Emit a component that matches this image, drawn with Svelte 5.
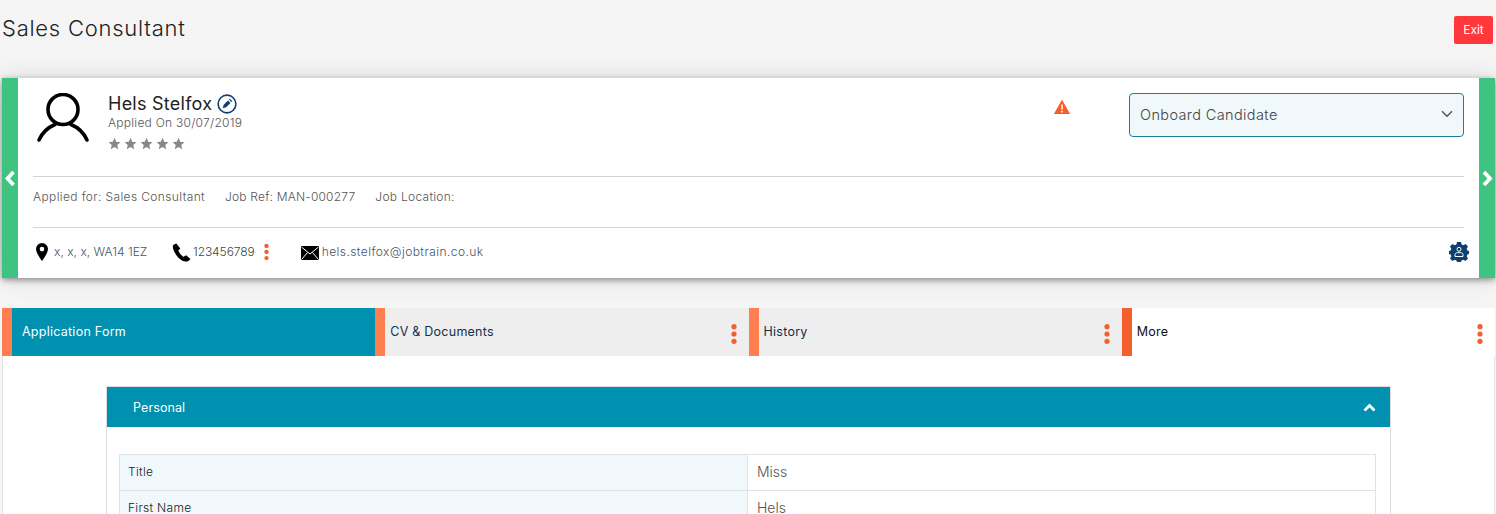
<script>
	const stars = [1, 2, 3, 4, 5];

	const tabs = [
		{ label: 'Application Form', active: true },
		{ label: 'CV & Documents' },
		{ label: 'History' },
		{ label: 'More', last: true }
	];

	const rows = [
		{ label: 'Title', value: 'Miss' },
		{ label: 'First Name', value: 'Hels' }
	];
</script>

{#snippet dots()}
	<svg class="dots" width="6" height="20" viewBox="0 0 6 20" fill="#f55f2d">
		<circle cx="3" cy="2.7" r="2.6" />
		<circle cx="3" cy="10" r="2.6" />
		<circle cx="3" cy="17.3" r="2.6" />
	</svg>
{/snippet}

<div class="page">
	<header class="top">
		<h1>Sales Consultant</h1>
		<button class="exit">Exit</button>
	</header>

	<section class="card">
		<div class="side">
			<svg width="12" height="17" viewBox="0 0 12 17" fill="none" stroke="#fff" stroke-width="3.8">
				<path d="M9.500 2l-6 6.500 6 6.500" />
			</svg>
		</div>

		<div class="card-body">
			<div class="head">
				<svg class="avatar" width="56" height="52" viewBox="0 0 56 52" fill="none" stroke="#000" stroke-width="3.6">
					<circle cx="28" cy="16.500" r="15" />
					<path d="M4 47C8 38 14 34 20 31.500M52 47C48 38 42 34 36 31.500" stroke-linecap="round" />
				</svg>
				<div class="who">
					<div class="name">
						Hels Stelfox
						<svg width="20" height="20" viewBox="0 0 21 21">
							<circle cx="10.500" cy="10.500" r="9.300" fill="none" stroke="#0f3f6e" stroke-width="1.700" />
							<path d="M6 15l1-3.600 4.600-4.600 2.600 2.600-4.600 4.600zM12.500 5.900l1-1 2.600 2.600-1 1z" fill="#0f3f6e" />
						</svg>
					</div>
					<div class="applied">Applied On 30/07/2019</div>
					<div class="stars">
						{#each stars as s (s)}
							<svg width="13" height="13" viewBox="0 0 24 24" fill="#888">
								<path d="M12 1.500l3.200 7.200 7.800.8-5.900 5.200 1.700 7.700L12 18.400l-6.800 4 1.700-7.700L1 9.500l7.800-.8z" />
							</svg>
						{/each}
					</div>
				</div>
				<svg class="warn" width="16" height="14" viewBox="0 0 16 14">
					<path d="M8 .5L15.600 14H.4z" fill="#f55f2d" stroke="#f55f2d" stroke-linejoin="round" />
					<path d="M8 4.500v5M8 10.800v1.600" stroke="#fff" stroke-width="1.500" />
				</svg>
				<div class="select">
					<span>Onboard Candidate</span>
					<svg width="12" height="8" viewBox="0 0 12 8" fill="none" stroke="#555" stroke-width="1.500">
						<path d="M1 1.200l5 5 5-5" />
					</svg>
				</div>
			</div>

			<div class="job">
				<span>Applied for: Sales Consultant</span>
				<span>Job Ref: MAN-000277</span>
				<span>Job Location:</span>
			</div>

			<div class="contact">
				<svg class="pin" width="12" height="18" viewBox="0 0 12 18">
					<path fill-rule="evenodd" d="M6 0a6 6 0 0 1 6 6c0 3.600-3.600 8.600-6 12C3.600 14.600 0 9.600 0 6a6 6 0 0 1 6-6zm0 3.800a2.300 2.300 0 1 0 0 4.600 2.300 2.300 0 0 0 0-4.600z" />
				</svg>
				<span class="addr">x, x, x, WA14 1EZ</span>
				<svg class="phone" width="19" height="19" viewBox="0 0 19 19">
					<path d="M4.300.5L1.500 1.800C.3 3 .6 6 3 10c2.500 4.200 6 8 10.500 8.500 1.500.2 3.300-.3 5-2.500l-4.400-3.700-2.500 1.500c-1.500-.6-4.600-4.300-5.300-6.400l2-2z" />
				</svg>
				<span class="tel">123456789</span>
				{@render dots()}
				<svg class="mail" width="18" height="14" viewBox="0 0 18 14">
					<rect width="18" height="14" />
					<path d="M.5 1l8.500 7 8.500-7M.5 13.500L6.500 6.500M17.500 13.500L11.500 6.500" fill="none" stroke="#fff" stroke-width="1" />
				</svg>
				<span class="email">hels.stelfox@jobtrain.co.uk</span>
				<svg class="gear" width="20" height="20" viewBox="0 0 20 20">
					<path fill="#0f3f6e" d="M8 0h4l.6 2.600 1.700.7L16.600 2 19 4.400l-1.300 2.300.7 1.700L20 9v3l-1.600.6-.7 1.700 1.300 2.300-2.400 2.400-2.300-1.300-1.700.7L12 20H8l-.6-1.600-1.700-.7L3.400 19 1 16.600l1.300-2.300-.7-1.700L0 12V9l1.600-.6.7-1.700L1 4.400 3.400 2l2.300 1.300 1.700-.7z" />
					<circle cx="10" cy="7.300" r="2" fill="none" stroke="#fff" stroke-width="1" />
					<path d="M6 14.500v-2c0-1 1-1.800 2.500-1.800h3c1.500 0 2.500.8 2.500 1.800v2z" fill="none" stroke="#fff" stroke-width="1" />
				</svg>
			</div>
		</div>

		<div class="side">
			<svg width="12" height="17" viewBox="0 0 12 17" fill="none" stroke="#fff" stroke-width="3.800">
				<path d="M3 2l6 6.500-6 6.500" />
			</svg>
		</div>
	</section>

	<nav class="tabs">
		{#each tabs as tab (tab.label)}
			<div class="tab" class:active={tab.active} class:last={tab.last}>
				<span>{tab.label}</span>
				{#if !tab.active}
					{@render dots()}
				{/if}
			</div>
		{/each}
	</nav>

	<main class="content">
		<section class="panel">
			<div class="panel-head">
				<span>Personal</span>
				<svg width="13" height="9" viewBox="0 0 13 9" fill="none" stroke="#fff" stroke-width="2.800">
					<path d="M1.500 7.500l5-5 5 5" />
				</svg>
			</div>
			<div class="panel-body">
				<div class="table">
					{#each rows as row (row.label)}
						<div class="label">{row.label}</div>
						<div class="value">{row.value}</div>
					{/each}
				</div>
			</div>
		</section>
	</main>
</div>

<style>
	:global(body) {
		background: #f5f5f5;
		overflow: hidden;
	}

	.page {
		height: 514px;
		overflow: hidden;
		font-family: Inter, "Open Sans", sans-serif;
		color: #333;
	}

	.top {
		height: 78px;
		display: flex;
		justify-content: space-between;
		align-items: flex-start;
		padding: 0 3px 0 2px;
	}

	h1 {
		margin: 14px 0 0;
		font-size: 22px;
		line-height: 29px;
		font-weight: 300;
		letter-spacing: 0.75px;
		color: #222;
	}

	.exit {
		margin-top: 16px;
		width: 39px;
		height: 28px;
		padding: 0 0 2px;
		border: none;
		border-radius: 2px;
		background: #ff383c;
		color: #fff;
		font: inherit;
		font-size: 12px;
	}

	.card {
		margin: 0 1px 0 2px;
		height: 200px;
		display: flex;
		background: #fff;
		box-shadow: 0 2px 6px rgba(0, 0, 0, 0.4), 0 0 24px rgba(0, 0, 0, 0.12);
	}

	.side {
		width: 16px;
		flex: none;
		background: #3fc380;
		display: flex;
		align-items: center;
		justify-content: center;
	}

	.card-body {
		flex: 1;
		min-width: 0;
		padding: 0 15px;
		display: flex;
		flex-direction: column;
	}

	.head {
		height: 98px;
		flex: none;
		display: flex;
		align-items: flex-start;
		border-bottom: 1px solid #cfd5dc;
	}

	.avatar {
		margin: 15px 0 0 2px;
		flex: none;
	}

	.who {
		margin: 15px 0 0 17px;
		flex: 1;
	}

	.name {
		display: flex;
		align-items: center;
		gap: 5px;
		height: 21px;
		font-size: 18px;
		line-height: 21px;
		letter-spacing: 0.25px;
		color: #222;
	}

	.applied {
		font-size: 12px;
		line-height: 17px;
		letter-spacing: 0.25px;
		font-weight: 350;
		color: #555;
	}

	.stars {
		display: flex;
		gap: 3px;
		margin-top: 6px;
	}

	.warn {
		margin: 22px 59px 0 0;
		flex: none;
	}

	.select {
		margin-top: 15px;
		width: 335px;
		height: 44px;
		box-sizing: border-box;
		flex: none;
		display: flex;
		align-items: center;
		justify-content: space-between;
		padding: 0 10px 2px 10px;
		background: #f0f8fb;
		border: 1px solid #1a7f9c;
		border-radius: 4px;
		font-size: 14.5px;
		font-weight: 300;
		letter-spacing: 0.38px;
		color: #444;
	}

	.job {
		height: 51px;
		flex: none;
		box-sizing: border-box;
		padding-top: 11px;
		display: flex;
		gap: 20px;
		font-size: 12px;
		line-height: 17px;
		letter-spacing: 0.2px;
		font-weight: 350;
		color: #555;
		border-bottom: 1px solid #cfd5dc;
	}

	.job span:first-child {
		letter-spacing: 0.37px;
	}

	.job span:last-child {
		letter-spacing: 0.28px;
	}

	.contact {
		flex: 1;
		display: flex;
		align-items: center;
		padding-bottom: 2px;
		font-size: 12px;
		font-weight: 350;
		color: #3f566e;
	}

	.contact span {
		margin-bottom: 2px;
	}

	.contact .dots {
		width: 5px;
		height: 18px;
	}

	.pin {
		margin: 0 6px 0 3px;
	}

	.addr {
		width: 118px;
		letter-spacing: 0.02px;
	}

	.phone {
		margin-right: 2px;
	}

	.tel {
		color: #444;
		margin-right: 9px;
		letter-spacing: -0.08px;
	}

	.mail {
		margin: 2px 3px 0 32px;
	}

	.email {
		flex: 1;
		letter-spacing: 0.44px;
	}

	.gear {
		margin-right: -5px;
	}

	.tabs {
		margin: 30px 1px 0 2px;
		height: 48px;
		display: grid;
		grid-template-columns: repeat(4, 1fr);
	}

	.tab {
		display: flex;
		align-items: center;
		justify-content: space-between;
		box-sizing: border-box;
		padding: 0 12px 0 5px;
		border-left: 10px solid #ff7f50;
		background: #eee;
		color: #12304d;
		font-size: 12.5px;
		font-weight: 400;
		letter-spacing: 0.25px;
	}

	.tab span {
		padding-bottom: 2px;
	}

	.tab .dots {
		margin-top: 4px;
	}

	.tab.active {
		background: #0090b0;
		color: #fff;
		padding-left: 10px;
	}

	.tab.last {
		background: #fff;
		color: #111;
		border-left-color: #f55f2d;
	}

	.content {
		margin: 0 1px 0 2px;
		height: 158px;
		box-sizing: border-box;
		padding: 30px 103px 0;
		background: #fff;
		border-left: 1px solid #e2e4ec;
		border-right: 1px solid #e2e4ec;
	}

	.panel {
		border: 1px solid #dcdee2;
		border-bottom: none;
		height: 100%;
		box-sizing: border-box;
	}

	.panel-head {
		height: 40px;
		display: flex;
		align-items: center;
		justify-content: space-between;
		padding: 0 14px 0 26px;
		background: #0090b0;
		color: #fff;
		font-size: 12.5px;
		font-weight: 400;
		letter-spacing: 0.1px;
	}

	.panel-body {
		padding: 27px 14px 0 12px;
	}

	.table {
		display: grid;
		grid-template-columns: 628px 1fr;
		grid-auto-rows: 36px;
		border: 1px solid #dfe3e8;
		border-bottom: none;
	}

	.label,
	.value {
		display: flex;
		align-items: center;
		box-sizing: border-box;
		padding-bottom: 2px;
		border-bottom: 1px solid #dfe3e8;
	}

	.label {
		padding-left: 8px;
		background: #f0f8fb;
		border-right: 1px solid #dfe3e8;
		font-size: 12px;
		font-weight: 350;
		letter-spacing: 0.3px;
		color: #222;
	}

	.value {
		padding-left: 9px;
		font-size: 14px;
		font-weight: 300;
		color: #555;
	}
</style>
